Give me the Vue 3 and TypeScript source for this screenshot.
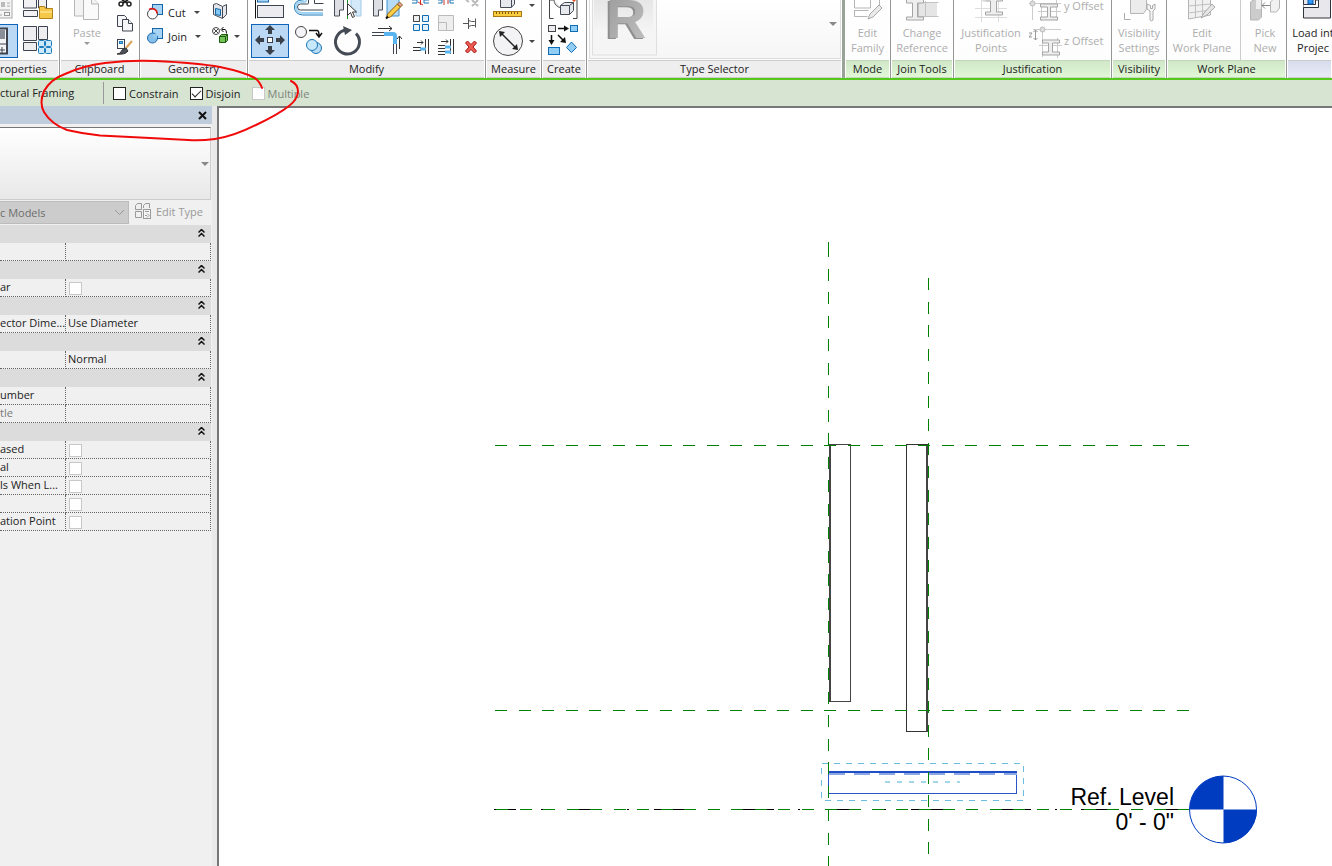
<script setup lang="ts">
interface PropertyRow {
  label: string
  value?: string
  checkbox?: boolean
  muted?: boolean
}

interface PropertyGroup {
  id: string
  rows: PropertyRow[]
}

const groups: PropertyGroup[] = [
  { id: 'constraints', rows: [{ label: '' }] },
  { id: 'structural', rows: [{ label: 'ar', checkbox: true }] },
  { id: 'dimensions', rows: [{ label: 'ector Dime...', value: 'Use Diameter' }] },
  { id: 'mechanical', rows: [{ label: '', value: 'Normal' }] },
  { id: 'identity', rows: [{ label: 'umber' }, { label: 'tle', muted: true }] },
  {
    id: 'other',
    rows: [
      { label: 'ased', checkbox: true },
      { label: 'al', checkbox: true },
      { label: 'ls When L...', checkbox: true },
      { label: '', checkbox: true },
      { label: 'ation Point', checkbox: true },
    ],
  },
]
</script>

<template>
  <div class="app">
    <header class="ribbon">
      <section class="panel p-properties">
        <div class="body">
          <button class="tool" aria-label="Type properties">
            <svg width="18" height="22" viewBox="0 0 18 22"><rect x="-3" y="-3" width="15" height="21" fill="#f5f5f5" stroke="#aaa" /><rect x="1" y="2" width="4" height="5" fill="#bbb" /><path d="M7 3h3M7 6h3M0 10h10M0 15h2" stroke="#aaa" /><rect x="4.500" y="12.500" width="5" height="3" fill="none" stroke="#999" /></svg>
          </button>
          <button class="tool" aria-label="Family types">
            <svg width="40" height="22" viewBox="18 0 40 22"><g fill="#f1f1f3" stroke="#3e444f"><path d="M23.500-3h13v11h-13zM38.500-3h8v11h-8zM23.500 10.500h14v6h-14z" /></g><path d="M39.500 18.500v-12h5l1 2h7v10z" fill="#f6c84a" stroke="#b3831b" /><path d="M40 12h12" stroke="#fff0ae" /></svg>
          </button>
          <button class="tool selected" aria-label="Properties">
            <svg width="17" height="34" viewBox="0 24 17 34"><rect x="-4" y="27.500" width="11" height="25" fill="#f4f4f6" stroke="#3e444f" stroke-width="2" /><rect x="0" y="29" width="5" height="9" fill="#888f99" /><path d="M0 43h6M0 49h5M2 46v6" stroke="#3e444f" /></svg>
          </button>
          <button class="tool" aria-label="Family category">
            <svg width="40" height="34" viewBox="18 24 40 34"><g fill="#eeeef1" stroke="#3e444f"><path d="M23.500 26.500h13v14h-13zM38.500 26.500h9v13h-9zM23.500 42.500h13v8h-13z" /></g><g fill="#cdeafc" stroke="#1b7bbb"><rect x="38.500" y="40.500" width="6" height="6" rx="1" /><rect x="45.500" y="40.500" width="6" height="6" rx="1" /><rect x="38.500" y="47.500" width="6" height="6" rx="1" /><rect x="45.500" y="47.500" width="6" height="6" rx="1" /></g></svg>
          </button>
        </div>
        <h2 class="start">roperties</h2>
      </section>

      <section class="panel p-clipboard">
        <div class="body">
          <button class="big" disabled>
            <svg width="30" height="25" viewBox="73 0 30 25"><g fill="#f3f3f3" stroke="#b6b6b6"><path d="M75.500-3h15v19h-15z" /><path d="M84.500-3h8l7 7v15.500h-15z" fill="#fafafa" /><path d="M92.500-3v7h7" /></g></svg>
            <span>Paste</span>
            <i class="caret"></i>
          </button>
          <div class="stack">
            <button class="tool" aria-label="Cut to clipboard">
              <svg width="22" height="11" viewBox="114 0 22 11"><path d="M122 0l5 3M128 0l-5 3" stroke="#222" stroke-width="2" /><circle cx="121" cy="4" r="2" fill="none" stroke="#222" stroke-width="1.500" /><circle cx="129" cy="4" r="2" fill="none" stroke="#222" stroke-width="1.500" /></svg>
            </button>
            <button class="tool" aria-label="Copy to clipboard">
              <svg width="22" height="22" viewBox="114 12 22 22"><g fill="#f6f6f8" stroke="#3e444f"><path d="M117.500 15.500h7l2 2v9h-9z" /><path d="M122.500 19.500h6l4 4v7.500h-10z" /><path d="M128.500 19.500v4h4" /></g></svg>
            </button>
            <button class="tool" aria-label="Match type properties">
              <svg width="22" height="22" viewBox="114 36 22 22"><rect x="117.500" y="39.500" width="7" height="9" fill="#fff" stroke="#3e444f" /><rect x="119.500" y="41.500" width="3" height="2" fill="#68b7ee" stroke="#1b7bbb" /><path d="M132 41l-6 7" stroke="#d9a45a" stroke-width="2" /><path d="M117 54q4 0 5-4l4-2 2 3q-3 4-11 3z" fill="#4b5059" stroke="#333" /></svg>
            </button>
          </div>
        </div>
        <h2>Clipboard</h2>
      </section>

      <section class="panel p-geometry">
        <div class="body">
          <div class="line">
            <button class="row-tool">
              <svg width="18" height="20" viewBox="146 2 18 20"><rect x="152.500" y="4.500" width="10" height="10" fill="#a8d5f5" stroke="#1566a8" /><circle cx="152.500" cy="14" r="5" fill="#fff" stroke="#444" /><path d="M149 9.500a5 5 0 0 1 8 4" fill="none" stroke="#e21717" stroke-width="1.500" /></svg>
              <span>Cut</span><i class="caret"></i>
            </button>
            <button class="tool push" aria-label="Cope">
              <svg width="18" height="20" viewBox="211 2 18 20"><path d="M213.500 4.500l3-1 6 3 4-2v10l-4 4-9-4z" fill="#e5e6ea" stroke="#444a55" /><path d="M222.500 7v11" stroke="#444a55" /><path d="M215.500 8.500l5 1v6l-5-1z" fill="#83c8f5" stroke="#1566a8" /></svg>
            </button>
          </div>
          <div class="line">
            <button class="row-tool">
              <svg width="18" height="20" viewBox="146 26 18 20"><rect x="152.500" y="28.500" width="10" height="10" fill="#a8d5f5" stroke="#1566a8" /><circle cx="152.500" cy="38" r="5" fill="#85bfe9" stroke="#1566a8" /><path d="M153 34h4v4h-4z" fill="#95caef" /></svg>
              <span>Join</span><i class="caret"></i>
            </button>
            <button class="tool push" aria-label="Split face">
              <svg width="18" height="20" viewBox="211 26 18 20"><circle cx="216" cy="31" r="3.500" fill="#fff" stroke="#444" /><path d="M214 29l4 4m0-4l-4 4" stroke="#444" /><path d="M222 29.500h3q1.500 0 1.500 4M223.500 27l-2.500 2.500 2.500 2.500" fill="none" stroke="#111" /><path d="M219.500 36.500l2-2h6v6l-2 2h-6z" fill="#72c257" stroke="#1e5b10" /><path d="M219.500 36.500h6v6m0-6l2-2" fill="none" stroke="#1e5b10" /></svg>
            </button>
            <i class="caret"></i>
          </div>
        </div>
        <h2>Geometry</h2>
      </section>

      <section class="panel p-modify">
        <div class="body">
          <div class="big-grid">
            <button class="tool" aria-label="Align">
              <svg width="39" height="22" viewBox="251 0 39 22"><path d="M255.500 0v18.500" stroke="#111" /><rect x="257.500" y="-6" width="11" height="8" fill="#a8d5f5" stroke="#1566a8" /><rect x="257.500" y="5.500" width="26" height="12" fill="#ececf0" stroke="#3e444f" /></svg>
            </button>
            <button class="tool" aria-label="Offset">
              <svg width="39" height="22" viewBox="290 0 39 22"><g fill="none"><path d="M308.500-2v5q0 1-1 1h-7q-3 0-3 3t3 3h22.500M314.500-2v5.500h9" stroke="#3e444f" /><path d="M304.500-2v1q0 1-2 1-8 0-8 7t8 8h20.500" stroke="#1976b8" /><path d="M306-2v3q0 1-4 1-6 0-6 5t6 6h21" stroke="#9fd3f4" stroke-width="2" /></g></svg>
            </button>
            <button class="tool" aria-label="Mirror by picked axis">
              <svg width="39" height="22" viewBox="329 0 39 22"><path d="M334.500-3h9v13h-4v6h-5z" fill="#dedfe4" stroke="#4a4f59" /><path d="M351-3h10v19h-5v-6h-5z" fill="#d4eafa" stroke="#a4cbe8" /><path d="M347.500 0v3m0 2v3m0 3v8" stroke="#198b19" /><path d="M347.500 3.500v12l3-3 2 5 2-1-2-4.500h4z" fill="#fff" stroke="#333" /></svg>
            </button>
            <button class="tool" aria-label="Mirror by drawn axis">
              <svg width="39" height="22" viewBox="368 0 39 22"><path d="M373.500-3h9v13h-4v6h-5z" fill="#dedfe4" stroke="#4a4f59" /><path d="M387-3h12v19h-12z" fill="#b8dbf5" stroke="#3e91cf" /><path d="M386.500 18l1-4 10-10 3 3-10 10z" fill="#fbcf45" stroke="#8f5a12" /><path d="M397.500 4l2-2 3 3-2 2z" fill="#e2a5a5" stroke="#8f5a12" /><path d="M386 18.500l2-2" stroke="#111" stroke-width="2" /></svg>
            </button>
            <button class="tool selected" aria-label="Move">
              <svg width="37" height="32" viewBox="252 25 37 32"><path d="M270 25l5 5h-3v4h-4v-4h-3zM270 55l5-5h-3v-4h-4v4h-3zM255 40l5-5v3h4v4h-4v3zM285 40l-5-5v3h-4v4h4v3z" fill="#3b414b" /><rect x="267.500" y="37.500" width="5" height="5" fill="#fff" stroke="#3b414b" /></svg>
            </button>
            <button class="tool" aria-label="Copy">
              <svg width="39" height="34" viewBox="290 24 39 34"><circle cx="301" cy="32" r="5.500" fill="#f4f4f6" stroke="#444" /><path d="M309 30.500h8q2 0 2 5M316 33l3 4 3-4" fill="none" stroke="#111" stroke-width="1.500" /><circle cx="316" cy="48" r="5.500" fill="#b8ddf5" stroke="#1976b8" /><circle cx="312" cy="45" r="5.500" fill="#c8e8fb" stroke="#1976b8" /></svg>
            </button>
            <button class="tool" aria-label="Rotate">
              <svg width="39" height="34" viewBox="329 24 39 34"><path d="M356 33.500a12 12 0 1 1-9.500-3.500" fill="none" stroke="#454b55" stroke-width="3" /><path d="M343 26l9 4-7 5z" fill="#454b55" /></svg>
            </button>
            <button class="tool" aria-label="Trim to corner">
              <svg width="39" height="34" viewBox="368 24 39 34"><path d="M372 32.500h17M372 35.500h17M393.500 40v14M396.500 40v14" stroke="#3e444f" /><path d="M384 34h9q2 0 2 2v8" fill="none" stroke="#5ab4ee" stroke-width="4" /><path d="M378 28.500h14m-3-2.500l3 2.500-3 2.500M399.500 49V36m-2.500 3l2.500-3 2.500 3" fill="none" stroke="#333" /></svg>
            </button>
          </div>
          <div class="small-grid">
            <button class="tool" aria-label="Split element"><svg width="25" height="12" viewBox="407 0 25 12"><path d="M412 0h5v3h-5M429 0h-5v3h5" fill="none" stroke="#1976b8" /><path d="M420.500 0v5M418 2l5 3" stroke="#cc3327" /></svg></button>
            <button class="tool" aria-label="Split with gap"><svg width="25" height="12" viewBox="432 0 25 12"><path d="M438 0h4v3h-4M454 0h-4v3h4" fill="none" stroke="#1976b8" /><path d="M444 0v5M448 0v4" stroke="#cc3327" /></svg></button>
            <button class="tool" aria-label="Unpin" disabled><svg width="25" height="12" viewBox="457 0 25 12"><path d="M466 0l3 2M472 0l6 6m0-6l-6 6" stroke="#bbb" stroke-width="2" /></svg></button>
            <button class="tool" aria-label="Array"><svg width="25" height="22" viewBox="407 12 25 22"><g fill="#e1f2fd" stroke="#0e6db5"><path d="M413.500 15.500h6v6h-6zM422.500 15.500h6v6h-6zM413.500 24.500h6v6h-6zM422.500 24.500h6v6h-6z" /></g><path d="M413.500 15.500h6v6h-6z" fill="#eee" stroke="#444" /></svg></button>
            <button class="tool" aria-label="Scale" disabled><svg width="25" height="22" viewBox="432 12 25 22"><path d="M438.500 15.500h15v15h-15zM438.500 22.500h8v8h-8z" fill="#eee" stroke="#bbb" /></svg></button>
            <button class="tool" aria-label="Pin"><svg width="25" height="22" viewBox="457 12 25 22"><path d="M463 23.500h5M468.500 18v11M468.500 20.500l3 1h3l1-1v6l-1-1h-3l-3 1M475.500 18.500v9" fill="none" stroke="#555" /></svg></button>
            <button class="tool" aria-label="Trim single"><svg width="25" height="22" viewBox="407 35 25 22"><path d="M413 47.500h8M413 50.500h8M425.500 39v15M428.500 39v15M417 42.500h6m-2-2l2 2-2 2" fill="none" stroke="#333" /><path d="M420 49h6" stroke="#5ab4ee" stroke-width="3" /></svg></button>
            <button class="tool" aria-label="Trim multiple"><svg width="25" height="22" viewBox="432 35 25 22"><path d="M438 45.500h7M438 48.500h7M438 51.500h7M438 54.500h7M450.500 39v15M453.500 39v15M441 41.500h7m-2-2l2 2-2 2" fill="none" stroke="#333" /><path d="M445 47h6M445 52h6" stroke="#5ab4ee" stroke-width="3" /></svg></button>
            <button class="tool" aria-label="Delete"><svg width="25" height="22" viewBox="457 35 25 22"><path d="M465.500 43l2-2 3.500 3.500 3.500-3.500 2 2-3.500 4 3.500 4-2 2-3.500-3.500-3.500 3.500-2-2 3.500-4z" fill="#ef5b50" stroke="#a51616" /></svg></button>
          </div>
        </div>
        <h2>Modify</h2>
      </section>

      <section class="panel p-measure">
        <div class="body">
          <div class="line">
            <button class="row-tool" aria-label="Measure distance">
              <svg width="36" height="24" viewBox="489 0 36 24"><path d="M500.500-3h11l3-1v8l-3 3.500h-11z" fill="#e7e9ee" stroke="#464c57" /><path d="M511.500 0v7" stroke="#464c57" /><rect x="493.500" y="11.500" width="28" height="5" fill="#f7cc3d" stroke="#a97a16" /><path d="M496.500 12v2m3-2v2m3-2v2m3-2v2m3-2v2m3-2v2m3-2v2m3-2v2" stroke="#7b5711" /></svg>
              <i class="caret raised"></i>
            </button>
          </div>
          <div class="line">
            <button class="row-tool" aria-label="Aligned dimension">
              <svg width="36" height="34" viewBox="489 24 36 34"><circle cx="508" cy="41" r="14.500" fill="#f3f3f5" stroke="#444" /><path d="M500 32l17 17" stroke="#222" stroke-width="1.500" /><path d="M499 31l6 1-5 5zM518 50l-6-1 5-5z" fill="#222" /></svg>
              <i class="caret"></i>
            </button>
          </div>
        </div>
        <h2>Measure</h2>
      </section>

      <section class="panel p-create">
        <div class="body">
          <button class="tool" aria-label="Create group"><svg width="36" height="23" viewBox="546 0 36 23"><path d="M554 0h-4.500v18.500h4M573 18.500h4V0" fill="none" stroke="#444" /><path d="M554 0q0 6 7 8" fill="#ddd" stroke="#666" /><path d="M560.500 5.500l4-3h9v8l-4 4h-9z" fill="#e8e9ed" stroke="#464c57" /><path d="M560.500 5.500h9v9m0-9l4-3" fill="none" stroke="#464c57" /><path d="M572 0h4l-2 2z" fill="#e04c20" /></svg></button>
          <button class="tool" aria-label="Create similar"><svg width="36" height="35" viewBox="546 23 36 35"><rect x="548.500" y="25.500" width="7" height="6" fill="#ececf0" stroke="#444" /><rect x="570.500" y="25.500" width="7" height="6" fill="#92cdf5" stroke="#0e6db5" /><rect x="548.500" y="47.500" width="11" height="7" fill="#92cdf5" stroke="#0e6db5" /><path d="M571.500 42l5 5.500-5 5-5-5z" fill="#92cdf5" stroke="#0e6db5" /><path d="M558 28.500h7M551.500 35v6M558 35l5 5" stroke="#111" stroke-width="1.500" /><path d="M564 25.500l5 3-5 3zM548.500 40h6l-3 5zM566 43l-6-1 5-5z" fill="#111" /></svg></button>
        </div>
        <h2>Create</h2>
      </section>

      <section class="panel p-type">
        <div class="body">
          <button class="type-selector" aria-label="Type selector">
            <svg width="66" height="56" viewBox="593 0 66 56"><defs><linearGradient id="mark" x2="1" y2="1"><stop offset="0" stop-color="#999" /><stop offset="1" stop-color="#c2c2c2" /></linearGradient><linearGradient id="thumb" x2="0" y2="1"><stop offset="0" stop-color="#e6e6e6" /><stop offset="1" stop-color="#f6f6f6" /></linearGradient></defs><rect x="593.500" y="-2" width="64" height="57" fill="#f5f5f5" stroke="#dfdfdf" /><path d="M595 0h59v35l-17-5-42-1z" fill="url(#thumb)" /><text x="607" y="38" class="mark" fill="url(#mark)">R</text></svg>
            <i class="caret wide"></i>
          </button>
        </div>
        <h2>Type Selector</h2>
      </section>

      <section class="panel context p-mode">
        <div class="body">
          <button class="big" disabled>
            <svg width="36" height="25" viewBox="850 0 36 25"><path d="M854.500-2h16v10h-16zM873.500-2h6v7M854.500 10.500h14M854.500 10v6.500h13" fill="none" stroke="#b5b5b5" /><path d="M868 19l2-5 9-9 3 3-9 9z" fill="#e9e9e9" stroke="#aaa" /></svg>
            <span>Edit</span><span>Family</span>
          </button>
        </div>
        <h2>Mode</h2>
      </section>

      <section class="panel context p-join">
        <div class="body">
          <button class="big" disabled>
            <svg width="40" height="25" viewBox="902 0 40 25"><path d="M918 2h19v14h-19z" fill="#e5e5e5" /><path d="M918.500 0v17m7-16v16m-7-14.500h20m-20 14h20" stroke="#c2c2c2" /><path d="M906.500 0v3h6v14h-6v3h17v-3h-6V3h6V0" fill="#eee" stroke="#a5a5a5" /></svg>
            <span>Change</span><span>Reference</span>
          </button>
        </div>
        <h2>Join Tools</h2>
      </section>

      <section class="panel context p-just">
        <div class="body">
          <button class="big" disabled>
            <svg width="36" height="25" viewBox="973 0 36 25"><path d="M975 8.500h32M975 17.500h32M981.500 0v22M998.500 0v22" stroke="#ddd" /><path d="M985.500-2v3h5v11h-5v3h17v-3h-6V1h6v-3" fill="#eee" stroke="#a5a5a5" /><circle cx="984" cy="0" r="2" fill="#ddd" /></svg>
            <span>Justification</span><span>Points</span>
          </button>
          <div class="offsets">
            <button class="offset first" disabled>
              <svg width="34" height="23" viewBox="1030 0 34 23"><path d="M1030 3.500h32M1033.500 0v20M1039 11.500h23M1042.500 7v14M1057.500 0v21" stroke="#ccc" /><circle cx="1033.500" cy="3.500" r="2.500" fill="#ddd" stroke="#bbb" /><path d="M1041.500 4v3h7v10h-7v3h17v-3h-7V7h7V4z" fill="#eee" stroke="#a5a5a5" /></svg>
              <span>y Offset</span>
            </button>
            <button class="offset" disabled>
              <svg width="34" height="34" viewBox="1030 25 34 34"><path d="M1034 29.500h28M1043.500 27v30M1040 45.500h23M1058.500 38v20" stroke="#ccc" /><path d="M1036.500 30v10m-2-2l2 2 2-2m-4-6l2-2 2 2" fill="none" stroke="#999" /><circle cx="1043.500" cy="29.500" r="2.500" fill="#ddd" stroke="#bbb" /><path d="M1043.500 40v3h6v9h-6v3h17v-3h-7v-9h7v-3z" fill="#eee" stroke="#a5a5a5" /><path d="M1030 33h3l-3 4h3" fill="none" stroke="#999" /></svg>
              <span>z Offset</span>
            </button>
          </div>
        </div>
        <h2>Justification</h2>
      </section>

      <section class="panel context p-vis">
        <div class="body">
          <button class="big" disabled>
            <svg width="36" height="25" viewBox="1121 0 36 25"><path d="M1124.500 13v6.500h6" fill="none" stroke="#aaa" /><path d="M1130.500-2h13l3-2v13l-3 4.500h-13z" fill="#ececec" stroke="#b5b5b5" /><path d="M1147 4v5l3 2v9q1.500 2 3 0v-9l2-2V4l-2.500 1.500v3h-2v-3z" fill="#f5f5f5" stroke="#aaa" /></svg>
            <span>Visibility</span><span>Settings</span>
          </button>
        </div>
        <h2>Visibility</h2>
      </section>

      <section class="panel context p-work">
        <div class="body">
          <button class="big plane" disabled>
            <svg width="36" height="25" viewBox="1184 0 36 25"><path d="M1188.500-1h22v16l-22 4z" fill="#f1f1f1" stroke="#b5b5b5" /><path d="M1195.500 0v18m7-18v17M1188.500 6l22-2M1188.500 13l22-3" fill="none" stroke="#c0c0c0" /><path d="M1201 18l3-5 8-9 3 3-8 8z" fill="#e5e5e5" stroke="#aaa" /></svg>
            <span>Edit</span><span>Work Plane</span>
          </button>
          <button class="big divided" disabled>
            <svg width="36" height="25" viewBox="1247 0 36 25"><path d="M1250.500 2l4-3h7v18l-3 3h-8z" fill="#ccc" stroke="#b5b5b5" /><path d="M1256 0h5v9h-5z" fill="#eee" /><path d="M1270 5.500h-8m3-3l-3 3 3 3" fill="none" stroke="#888" /><path d="M1270.500 2l3-3h6v9l-3 4h-6z" fill="#f1f1f1" stroke="#b5b5b5" /></svg>
            <span>Pick</span><span>New</span>
          </button>
        </div>
        <h2>Work Plane</h2>
      </section>

      <section class="panel editor p-load">
        <div class="body">
          <button class="big">
            <svg width="40" height="25" viewBox="1294 0 40 25"><path d="M1304.500-2v20h27V-2" fill="#e7e7ec" stroke="#30343d" /><path d="M1304.500 7.500h15V0h-3v4.500h-12" fill="#fff" stroke="#30343d" /><rect x="1309" y="-1" width="5" height="5" fill="#309cff" stroke="#0756a8" /></svg>
            <span>Load int</span><span>Projec</span>
          </button>
        </div>
        <h2></h2>
      </section>
    </header>

    <div class="options">
      <span class="mode">ctural Framing</span>
      <label><input type="checkbox" />Constrain</label>
      <label><input type="checkbox" checked />Disjoin</label>
      <label class="off"><input type="checkbox" disabled />Multiple</label>
    </div>

    <div class="workspace">
      <aside class="palette">
        <div class="palette-head">
          <button aria-label="Close"><svg width="9" height="9" viewBox="0 0 9 9"><path d="M1 1l7 7M8 1l-7 7" stroke="#111" stroke-width="2" /></svg></button>
        </div>
        <button class="preview" aria-label="Type preview"><i class="caret wide"></i></button>
        <div class="filter">
          <div class="select-wrap">
            <select aria-label="Category" disabled><option>c Models</option></select>
            <svg width="9" height="6" viewBox="0 0 9 6"><path d="M0 0l4.500 4.500L9 0" fill="none" stroke="#999" /></svg>
          </div>
          <button class="edit-type" disabled>
            <svg width="17" height="17" viewBox="0 0 17 17"><g fill="none" stroke="#999"><path d="M.5 6.500v-4l2-2h4v6zM8.500 5V2.500l2-2h4V5M.5 8.500h6v6h-6z" /><rect x="8.500" y="6.500" width="7" height="9" fill="#f6f6f6" /><path d="M10 8.500h4M10 12.500h2m0-2l2 2-2 2" /></g></svg>
            Edit Type
          </button>
        </div>
        <table>
          <colgroup><col class="name-col" /><col /></colgroup>
          <tbody v-for="group in groups" :key="group.id">
            <tr class="group">
              <th colspan="2">
                <button aria-label="Collapse group"><svg width="7" height="8" viewBox="0 0 7 8"><path d="M.5 3.500l3-3 3 3M.5 7.500l3-3 3 3" fill="none" stroke="#111" stroke-width="1.500" /></svg></button>
              </th>
            </tr>
            <tr v-for="(row, i) in group.rows" :key="i">
              <td :class="{ muted: row.muted }">{{ row.label }}</td>
              <td>
                <input v-if="row.checkbox" type="checkbox" disabled :aria-label="row.label || 'Option'" />
                <template v-else>{{ row.value }}</template>
              </td>
            </tr>
          </tbody>
        </table>
      </aside>

      <main class="canvas">
        <svg class="drawing" viewBox="219 108 1113 758" preserveAspectRatio="xMinYMin meet" role="img" aria-label="Elevation view">
          <g fill="none" shape-rendering="crispEdges">
            <rect x="829.500" y="444.500" width="21" height="257" stroke="#444" />
            <path d="M830 445v257" stroke="#444" stroke-width="2" />
            <rect x="906.500" y="444.500" width="21" height="287" stroke="#333" />
            <path d="M927 445v287" stroke="#444" stroke-width="2" />
            <rect x="828.500" y="771.500" width="188" height="22" stroke="#2a55c8" />
            <path d="M829 773.500h188" stroke="#8ea6e4" stroke-width="2" stroke-dasharray="16 9" />
            <path d="M829 772h188" stroke="#1f4fc6" stroke-width="2" />
            <path d="M885 782h75" stroke="#a3d6ea" stroke-width="2" stroke-dasharray="5 7" />
            <rect x="821.500" y="763.500" width="202" height="37" stroke="#6bbde0" stroke-dasharray="6 6" />
            <path d="M494 809.500h22m25 0h2m24 0h35m25 0h2m25 0h34m25 0h2m24 0h35m24 0h2m25 0h34m25 0h2m25 0h34m25 0h2m24 0h35m24 0h2m24 0h34m25 0h2m24 0h22" stroke="#000" />
            <g stroke="#008000">
              <path d="M828.500 242v3" />
              <path d="M828.500 245v621M928.500 278v588M495 445.500h695M495 710.500h695M496 809.500h694" stroke-dasharray="12 12 12 11" />
            </g>
          </g>
          <circle cx="1223" cy="809.500" r="33.500" fill="#fff" stroke="#003cc0" />
          <path d="M1223.500 809.500V776a33.500 33.500 0 0 0-34 33.500zM1223.500 809.500V843a33.500 33.500 0 0 0 33.500-33.500z" fill="#003cc0" />
          <text x="1174" y="805" text-anchor="end" class="level">Ref. Level</text>
          <text x="1174" y="830" text-anchor="end" class="level">0' - 0"</text>
        </svg>
      </main>
    </div>

    <svg class="markup" width="310" height="150" viewBox="0 0 310 150" aria-hidden="true">
      <path d="M291 81Q298 84 298 92Q297 100 289 106Q279 114 256 125Q232 137 215 139Q200 141 188 140L150 138L100 135.500Q84 134 67 130Q51 124 44 112Q39 103 44 91Q51 79 65 74Q82 66 105 63Q130 60 155 61Q198 63 220 67Q244 72 255 78Q260 82 262 88" fill="none" stroke="#f00a0a" stroke-width="2" stroke-linecap="round" />
    </svg>
  </div>
</template>

<style>
html,
body {
  height: 100%;
  margin: 0;
}
#app {
  height: 100%;
}
</style>

<style scoped>
* {
  box-sizing: border-box;
}
.app {
  position: relative;
  display: flex;
  flex-direction: column;
  min-height: 100%;
  overflow: hidden;
  background: #f0f0f0;
  color: #222;
  font: 11px/15px "Open Sans", "Noto Sans", sans-serif;
}
button {
  display: flex;
  align-items: center;
  justify-content: center;
  margin: 0;
  padding: 0;
  border: 0;
  background: none;
  color: inherit;
  font: inherit;
  white-space: nowrap;
}
svg {
  display: block;
  flex: none;
}
.ribbon {
  display: flex;
  border-bottom: 2px solid #56c81c;
  background: #fff;
}
.panel {
  flex: none;
  display: flex;
  flex-direction: column;
  border-right: 1px solid #939893;
  overflow: hidden;
}
.body {
  display: flex;
  height: 60px;
  overflow: hidden;
  background: linear-gradient(#fff, #fdfdfd);
}
h2 {
  height: 18px;
  margin: 0 1px;
  border-top: 1px solid #ccc;
  border-bottom: 1px solid #ccc;
  background: #eee;
  font: inherit;
  line-height: 16px;
  text-align: center;
  white-space: nowrap;
}
h2.start {
  margin-left: 0;
  text-align: left;
}
.context h2 {
  border-color: #c4d6bd;
  background: linear-gradient(#d0e8c8, #e1f7d6);
}
.editor h2 {
  background: linear-gradient(#d8dcec, #e8ebf7);
}
.p-properties { width: 60px; }
.p-clipboard { width: 80px; }
.p-geometry { width: 108px; }
.p-modify { width: 238px; }
.p-measure { width: 56px; }
.p-create { width: 45px; }
.p-type {
  flex: 1;
  border-right: 3px solid #9aa397;
}
.p-mode { width: 46px; }
.p-join { width: 63px; }
.p-just { width: 158px; }
.p-vis { width: 55px; }
.p-work { width: 120px; }
.p-load {
  width: 45px;
  border-right: 0;
}
.p-properties .body {
  display: grid;
  grid-template: 24px 34px / 18px 1fr;
}
.tool {
  align-items: flex-start;
  justify-content: flex-start;
}
.selected {
  border: 1px solid #0c63b7;
  background: #bbd9f5;
}
.p-properties .selected {
  border-left: 0;
}
.caret {
  flex: none;
  width: 0;
  height: 0;
  border: 3px solid transparent;
  border-top-color: #444;
  border-bottom: 0;
}
.caret.wide {
  border-width: 4px;
  border-bottom: 0;
  border-top-color: #888;
}
.big {
  flex: 1;
  flex-direction: column;
  justify-content: flex-start;
  height: 60px;
}
.big:disabled,
.offset:disabled {
  color: #adadad;
}
.big .caret {
  margin-top: 2px;
  border-top-color: #999;
}
.stack {
  display: grid;
  grid-template-rows: 12px 24px 22px;
  width: 25px;
}
.p-geometry .body,
.p-measure .body {
  flex-direction: column;
}
.line {
  display: flex;
  align-items: center;
  height: 24px;
}
.p-geometry .line {
  padding-left: 6px;
}
.p-measure .line + .line {
  height: 34px;
}
.row-tool {
  gap: 4px;
}
.p-geometry .row-tool {
  width: 56px;
  justify-content: flex-start;
}
.row-tool .caret {
  margin-left: 4px;
}
.p-measure .row-tool {
  padding-left: 3px;
}
.p-measure .row-tool .caret {
  margin-left: 0;
}
.caret.raised {
  align-self: flex-start;
  margin-top: 4px;
}
.push {
  margin: 0 5px 0 9px;
}
.big-grid {
  display: grid;
  grid-template: 24px 34px / repeat(4, 39px);
  padding-left: 3px;
}
.big-grid .selected {
  width: 38px;
}
.small-grid {
  display: grid;
  grid-template: 12px 23px 22px / repeat(3, 25px);
}
.p-create .body {
  flex-direction: column;
  padding-left: 4px;
}
.type-selector {
  flex: 1;
  justify-content: space-between;
  align-items: flex-start;
  height: 59px;
  margin: 0 1px 0 2px;
  padding: 0 3px 0 2px;
  border: 1px solid #ddd;
  border-top: 0;
  background: linear-gradient(#fff, #f6f6f6);
}
.type-selector .caret {
  margin-top: 22px;
}
.mark {
  font: bold 56px "Liberation Sans", Arial, sans-serif;
  filter: drop-shadow(-2px 1px 0 #8f8f8f);
}
.p-just .big {
  flex: none;
  width: 74px;
}
.offsets {
  display: flex;
  flex-direction: column;
  padding-left: 1px;
}
.offset {
  justify-content: flex-start;
  height: 34px;
  gap: 1px;
}
.offset span {
  margin-bottom: 4px;
}
.offset.first {
  align-items: flex-start;
  height: 25px;
  line-height: 11px;
}
.plane {
  padding-right: 3px;
}
.divided {
  flex: none;
  width: 46px;
  padding-left: 3px;
  border-left: 1px solid #ccc;
}
.p-load .big {
  flex: none;
  width: 52px;
}
.options {
  display: flex;
  align-items: center;
  height: 26px;
  background: #d8e4d2;
}
.mode {
  width: 104px;
  height: 22px;
  border-right: 1px solid #999;
  line-height: 22px;
  white-space: nowrap;
}
.options label {
  display: flex;
  align-items: center;
  gap: 3px;
  margin-left: 9px;
  white-space: nowrap;
}
.options label + label {
  margin-left: 11px;
}
.off {
  color: #7c847a;
}
input {
  appearance: none;
  width: 13px;
  height: 13px;
  margin: 0;
  border: 1px solid #222;
  background: #fff;
}
input:checked {
  display: grid;
  place-items: center;
}
input:checked::before {
  content: "";
  width: 8px;
  height: 4px;
  border: solid #222;
  border-width: 0 0 1px 1px;
  rotate: -45deg;
  translate: 0 -1px;
}
input:disabled {
  border-color: #c8c8c8;
}
.workspace {
  flex: 1;
  display: flex;
}
.palette {
  flex: none;
  width: 217px;
  padding-right: 6px;
  background: linear-gradient(to left, #e9e9e9 5px, #f0f0f0 5px);
}
.palette-head {
  display: flex;
  justify-content: flex-end;
  align-items: center;
  height: 18px;
  margin: 0 -1px 3px 0;
  padding-right: 5px;
  background: #bfccdb;
}
.preview {
  width: 100%;
  height: 73px;
  justify-content: flex-end;
  padding-right: 1px;
  border: solid #ccc;
  border-width: 1px 1px 1px 0;
  border-top-color: #777;
  background: linear-gradient(#fff, #e8e8e8);
}
.filter {
  display: flex;
  align-items: center;
  height: 25px;
}
.select-wrap {
  position: relative;
  width: 129px;
}
.select-wrap svg {
  position: absolute;
  right: 5px;
  top: 9px;
}
select {
  display: block;
  appearance: none;
  width: 100%;
  height: 23px;
  margin: 0;
  padding: 0;
  border: 1px solid #bbb;
  border-left: 0;
  border-radius: 0;
  background: #ccc;
  color: #6d6d6d;
  opacity: 1;
  font: inherit;
}
.edit-type {
  gap: 4px;
  margin-left: 6px;
  padding-bottom: 3px;
  color: #999;
}
table {
  width: 100%;
  table-layout: fixed;
  border-collapse: separate;
  border-spacing: 0;
}
.name-col {
  width: 66px;
}
th,
td {
  height: 18px;
  padding: 0 0 2px;
  line-height: 15px;
  white-space: nowrap;
  overflow: hidden;
}
th {
  background: #dcdcdc;
}
th button {
  margin: 0 6px 0 auto;
}
td {
  border-right: 1px dotted #666;
  border-bottom: 1px dotted #666;
}
td + td {
  padding-left: 2px;
}
td input {
  display: block;
  margin: 3px 0 -1px 1px;
}
.muted {
  color: #777;
}
.canvas {
  flex: 1;
  border: solid #777;
  border-width: 2px 0 0 2px;
  background: #fff;
}
.drawing {
  width: 100%;
}
.level {
  font: 23px "Liberation Sans", Arial, sans-serif;
  fill: #000;
}
.markup {
  position: absolute;
  left: 0;
  top: 0;
  pointer-events: none;
}
</style>
